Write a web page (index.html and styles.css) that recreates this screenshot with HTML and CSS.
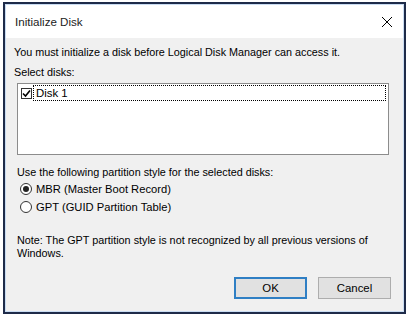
FILE: index.html
```html
<!DOCTYPE html>
<html lang="en">
<head>
    <meta charset="UTF-8">
    <title>Initialize Disk</title>
    <link rel="stylesheet" href="styles.css">
</head>
<body>
    <div class="window">
        <div class="title-bar">
            <span class="title">Initialize Disk</span>
            <svg class="close" width="12" height="12" viewBox="0 0 12 12">
                <path d="M1 1 L11 11 M11 1 L1 11" stroke="#000" stroke-width="1" fill="none"/>
            </svg>
        </div>
        <div class="content">
            <p class="intro">You must initialize a disk before Logical Disk Manager can access it.</p>
            <p class="label">Select disks:</p>
            <div class="listbox">
                <div class="list-item">
                    <span class="checkbox">
                        <svg width="9" height="9" viewBox="0 0 9 9">
                            <path d="M1 4.5 L3.5 7 L8 1.5" stroke="#000" stroke-width="1.6" fill="none"/>
                        </svg>
                    </span>
                    <span class="item-text">Disk 1</span>
                </div>
            </div>
            <p class="section">Use the following partition style for the selected disks:</p>
            <div class="radio-row">
                <span class="radio checked"></span>
                <span>MBR (Master Boot Record)</span>
            </div>
            <div class="radio-row">
                <span class="radio"></span>
                <span>GPT (GUID Partition Table)</span>
            </div>
            <p class="note">Note: The GPT partition style is not recognized by all previous versions of Windows.</p>
            <div class="buttons">
                <button class="btn btn-default">OK</button>
                <button class="btn">Cancel</button>
            </div>
        </div>
    </div>
</body>
</html>
```

FILE: styles.css
```css
body {
    margin: 0;
    padding: 0;
    background: #ffffff;
    font-family: "Liberation Sans", Arial, sans-serif;
    font-size: 10.8px;
    color: #000;
}

.window {
    margin: 2px 0 0 3px;
    width: 403px;
    height: 312px;
    box-sizing: border-box;
    border: 2px solid #1e2b49;
    box-shadow: inset 0 0 0 1px #c9dcf2;
    background: #f0f0f0;
    display: flex;
    flex-direction: column;
    overflow: hidden;
}

.title-bar {
    height: 33px;
    background: #fff;
    display: flex;
    align-items: center;
    justify-content: space-between;
    padding: 0 10px 0 9px;
    flex-shrink: 0;
    margin: 1px 1px 0 1px;
}

.title {
    font-size: 11.6px;
    color: #222;
}

.close {
    display: block;
}

.content {
    padding: 0 0 0 9px;
    flex: 1;
}

p {
    margin: 0;
    line-height: 15px;
}

.intro {
    margin-top: 7px;
}

.label {
    margin-top: 5px;
}

.listbox {
    margin: 3px 0 0 3px;
    width: 372px;
    height: 72px;
    box-sizing: border-box;
    border: 1px solid #8c8c8c;
    background: #fff;
    padding: 1px;
}

.list-item {
    display: flex;
    align-items: center;
    height: 16px;
}

.checkbox {
    width: 11px;
    height: 11px;
    box-sizing: border-box;
    border: 1px solid #333;
    margin-left: 2px;
    display: flex;
    align-items: center;
    justify-content: center;
    background: #fff;
}

.item-text {
    flex: 1;
    height: 16px;
    line-height: 14px;
    font-size: 11.4px;
    box-sizing: border-box;
    border: 1px dotted #000;
    padding-left: 2px;
    margin-left: 1px;
    margin-right: 1px;
}

.section {
    margin: 10px 0 0 3px;
}

.radio-row {
    display: flex;
    align-items: center;
    height: 18px;
    margin-left: 6px;
    gap: 4px;
    font-size: 11.2px;
}

.radio-row:first-of-type {
    margin-top: 3px;
}

.radio {
    width: 12px;
    height: 12px;
    box-sizing: border-box;
    border: 1px solid #333;
    border-radius: 50%;
    background: #fff;
    display: flex;
    align-items: center;
    justify-content: center;
}

.radio.checked::after {
    content: "";
    width: 6px;
    height: 6px;
    border-radius: 50%;
    background: #222;
}

.note {
    margin: 18px 10px 0 3px;
    line-height: 13px;
}

.buttons {
    display: flex;
    justify-content: flex-end;
    gap: 11px;
    margin-top: 17px;
    padding-right: 13px;
}

.btn {
    width: 73px;
    height: 22px;
    box-sizing: border-box;
    background: #e1e1e1;
    border: 1px solid #adadad;
    font-family: "Liberation Sans", Arial, sans-serif;
    font-size: 11.4px;
    color: #000;
    padding: 0;
}

.btn-default {
    border: 2px solid #2f7fc4;
}
```
